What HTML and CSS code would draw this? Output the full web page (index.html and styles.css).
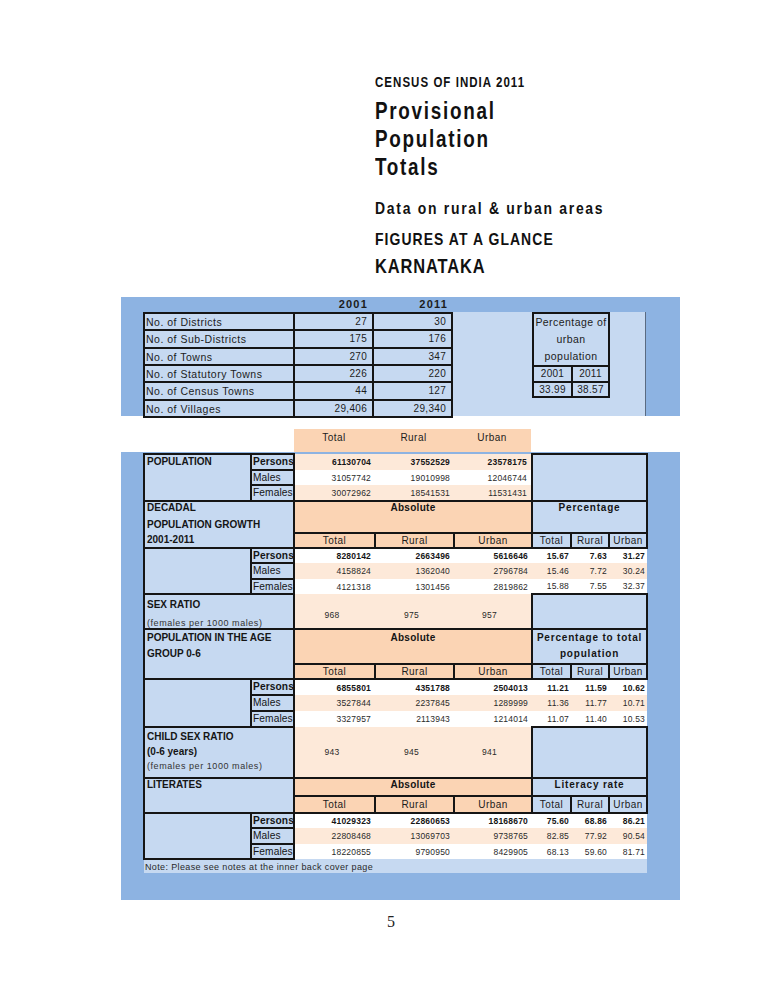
FILE: index.html
```html
<!DOCTYPE html>
<html lang="en">
<head>
<meta charset="utf-8">
<title>Census of India 2011 - Karnataka</title>
<link rel="stylesheet" href="styles.css">
</head>
<body>
<div class="page">
  <header class="title">
    <div class="census">CENSUS OF INDIA 2011</div>
    <h1>Provisional<br>Population<br>Totals</h1>
    <div class="sub1">Data on rural &amp; urban areas</div>
    <div class="sub2">FIGURES AT A GLANCE</div>
    <div class="sub3">KARNATAKA</div>
  </header>

  <section class="panel toppanel">
    <div class="yearhead">
      <span></span><span>2001</span><span>2011</span>
    </div>
    <div class="toparea">
      <table class="facts">
        <tr class="h17"><td class="fl">No. of Districts</td><td class="fv">27</td><td class="fv">30</td></tr>
        <tr class="h18"><td class="fl">No. of Sub-Districts</td><td class="fv">175</td><td class="fv">176</td></tr>
        <tr class="h17"><td class="fl">No. of Towns</td><td class="fv">270</td><td class="fv">347</td></tr>
        <tr class="h17"><td class="fl">No. of Statutory Towns</td><td class="fv">226</td><td class="fv">220</td></tr>
        <tr class="h18"><td class="fl">No. of Census Towns</td><td class="fv">44</td><td class="fv">127</td></tr>
        <tr class="h17"><td class="fl">No. of Villages</td><td class="fv">29,406</td><td class="fv">29,340</td></tr>
      </table>
      <div class="pctbox">
        <div class="pcttitle">Percentage of<br>urban<br>population</div>
        <div class="pctgrid">
          <span>2001</span><span class="pr">2011</span>
          <span>33.99</span><span class="pr">38.57</span>
        </div>
      </div>
    </div>
  </section>

  <div class="colhead"><span>Total</span><span>Rural</span><span>Urban</span></div>

  <section class="panel mainpanel">
    <table class="grid">
      <colgroup>
        <col class="c1"><col class="c2"><col class="c3"><col class="c4"><col class="c5"><col class="c6"><col class="c7"><col class="c8">
      </colgroup>

      <tr class="h16 tint">
        <td class="lbl lpop" rowspan="3">POPULATION</td>
        <td class="sl b">Persons</td>
        <td class="n b">61130704</td><td class="n b">37552529</td><td class="n b">23578175</td>
        <td class="blank" colspan="3" rowspan="3"></td>
      </tr>
      <tr class="h15 plain">
        <td class="sl">Males</td>
        <td class="n">31057742</td><td class="n">19010998</td><td class="n">12046744</td>
      </tr>
      <tr class="h16 tint">
        <td class="sl">Females</td>
        <td class="n">30072962</td><td class="n">18541531</td><td class="n">11531431</td>
      </tr>

      <tr class="h32">
        <td class="lbl ldec" colspan="2" rowspan="2"><span class="d1">DECADAL</span><span class="d2">POPULATION GROWTH</span><span class="d3">2001-2011</span></td>
        <td class="ah ah1" colspan="3">Absolute</td>
        <td class="ph ph1" colspan="3">Percentage</td>
      </tr>
      <tr class="h15">
        <td class="as">Total</td><td class="as">Rural</td><td class="as">Urban</td>
        <td class="ps">Total</td><td class="ps">Rural</td><td class="ps">Urban</td>
      </tr>
      <tr class="h15 plain">
        <td class="lbl" rowspan="3"></td>
        <td class="sl b">Persons</td>
        <td class="n b">8280142</td><td class="n b">2663496</td><td class="n b">5616646</td>
        <td class="n p b">15.67</td><td class="n p b">7.63</td><td class="n p b">31.27</td>
      </tr>
      <tr class="h16 tint">
        <td class="sl">Males</td>
        <td class="n">4158824</td><td class="n">1362040</td><td class="n">2796784</td>
        <td class="n p">15.46</td><td class="n p">7.72</td><td class="n p">30.24</td>
      </tr>
      <tr class="h15 plain">
        <td class="sl">Females</td>
        <td class="n">4121318</td><td class="n">1301456</td><td class="n">2819862</td>
        <td class="n p">15.88</td><td class="n p">7.55</td><td class="n p">32.37</td>
      </tr>

      <tr class="h35">
        <td class="lbl lsex" colspan="2"><span class="ln">SEX RATIO</span><span class="sm">(females per 1000 males)</span></td>
        <td class="rv rsex">968</td><td class="rv rsex">975</td><td class="rv rsex">957</td>
        <td class="blank" colspan="3"></td>
      </tr>

      <tr class="h35">
        <td class="lbl lage" colspan="2" rowspan="2">POPULATION IN THE AGE<br>GROUP 0-6</td>
        <td class="ah ah2" colspan="3">Absolute</td>
        <td class="ph ph2" colspan="3">Percentage to total<br>population</td>
      </tr>
      <tr class="h15">
        <td class="as">Total</td><td class="as">Rural</td><td class="as">Urban</td>
        <td class="ps">Total</td><td class="ps">Rural</td><td class="ps">Urban</td>
      </tr>
      <tr class="h16 plain">
        <td class="lbl" rowspan="3"></td>
        <td class="sl b">Persons</td>
        <td class="n b">6855801</td><td class="n b">4351788</td><td class="n b">2504013</td>
        <td class="n p b">11.21</td><td class="n p b">11.59</td><td class="n p b">10.62</td>
      </tr>
      <tr class="h16 tint">
        <td class="sl">Males</td>
        <td class="n">3527844</td><td class="n">2237845</td><td class="n">1289999</td>
        <td class="n p">11.36</td><td class="n p">11.77</td><td class="n p">10.71</td>
      </tr>
      <tr class="h16 plain">
        <td class="sl">Females</td>
        <td class="n">3327957</td><td class="n">2113943</td><td class="n">1214014</td>
        <td class="n p">11.07</td><td class="n p">11.40</td><td class="n p">10.53</td>
      </tr>

      <tr class="h51">
        <td class="lbl lchild" colspan="2"><span class="ln">CHILD SEX RATIO</span><span class="ln">(0-6 years)</span><span class="sm sm2">(females per 1000 males)</span></td>
        <td class="rv">943</td><td class="rv">945</td><td class="rv">941</td>
        <td class="blank" colspan="3"></td>
      </tr>

      <tr class="h18">
        <td class="lbl llit" colspan="2" rowspan="2">LITERATES</td>
        <td class="ah ah3" colspan="3">Absolute</td>
        <td class="ph ph3" colspan="3">Literacy rate</td>
      </tr>
      <tr class="h17">
        <td class="as">Total</td><td class="as">Rural</td><td class="as">Urban</td>
        <td class="ps">Total</td><td class="ps">Rural</td><td class="ps">Urban</td>
      </tr>
      <tr class="h15 plain">
        <td class="lbl" rowspan="3"></td>
        <td class="sl b">Persons</td>
        <td class="n b">41029323</td><td class="n b">22860653</td><td class="n b">18168670</td>
        <td class="n p b">75.60</td><td class="n p b">68.86</td><td class="n p b">86.21</td>
      </tr>
      <tr class="h16 tint">
        <td class="sl">Males</td>
        <td class="n">22808468</td><td class="n">13069703</td><td class="n">9738765</td>
        <td class="n p">82.85</td><td class="n p">77.92</td><td class="n p">90.54</td>
      </tr>
      <tr class="h15 plain">
        <td class="sl">Females</td>
        <td class="n">18220855</td><td class="n">9790950</td><td class="n">8429905</td>
        <td class="n p">68.13</td><td class="n p">59.60</td><td class="n p">81.71</td>
      </tr>
      <tr class="h14">
        <td class="note" colspan="8">Note: Please see notes at the inner back cover page</td>
      </tr>
    </table>
  </section>

  <div class="pageno">5</div>
</div>
</body>
</html>
```

FILE: styles.css
```css
* { box-sizing: border-box; }

body {
  margin: 0;
  background: #ffffff;
  color: #1c1c1c;
  font-family: "Liberation Sans", Arial, sans-serif;
}

.page {
  width: 768px;
  height: 994px;
  overflow: hidden;
}

/* ---------- title block (narrow, spaced lettering) ---------- */
.title {
  margin-left: 375px;
  padding-top: 74px;
  font-weight: bold;
  color: #111;
  transform: scaleX(0.82);
  transform-origin: left top;
}
.census { font-size: 14px; line-height: 16px; letter-spacing: 1.28px; }
.title h1 {
  margin: 6.5px 0 0;
  font-size: 23px;
  line-height: 28px;
  letter-spacing: 2.1px;
}
.sub1 { margin-top: 17px; font-size: 17px; line-height: 22px; letter-spacing: 2.1px; }
.sub2 { margin-top: 9px; font-size: 17px; line-height: 22px; letter-spacing: 1.3px; }
.sub3 { margin-top: 3px; font-size: 20px; line-height: 24px; letter-spacing: 1.1px; }

/* ---------- panels ---------- */
.panel {
  margin-left: 121px;
  width: 559px;
  background: #8db3e2;
  padding-left: 22px;
}

.toppanel { margin-top: 19.5px; }

.yearhead {
  display: grid;
  grid-template-columns: 150px 79px 80px;
  height: 15px;
  font-size: 11px;
  line-height: 15px;
  font-weight: bold;
  letter-spacing: 1.2px;
  text-align: right;
}
.yearhead span { padding-right: 4px; }

.toparea {
  width: 503px;
  height: 104px;
  background: #c6d9f1;
  display: flex;
  align-items: flex-start;
  border-right: 1px solid #5a6b82;
}

.facts {
  border-collapse: collapse;
  table-layout: fixed;
  width: 309px;
}
.facts td {
  border: 2px solid #151515;
  padding: 0 0 0 1px;
  font-size: 10.5px;
  line-height: 12px;
  letter-spacing: 0.5px;
  white-space: nowrap;
  color: #1c1c1c;
}
.facts .fl { width: 150px; }
.facts .fv { width: 79px; text-align: right; padding-right: 5px; font-size: 10px; letter-spacing: 0.3px; }

.h14 { height: 14px; }
.h15 { height: 15px; }
.h16 { height: 16px; }
.h17 { height: 17px; }
.h18 { height: 18px; }
.h32 { height: 32px; }
.h35 { height: 35px; }
.h51 { height: 51px; }

.pctbox {
  margin-left: 79px;
  width: 78px;
  height: 86px;
  border: 2px solid #151515;
  display: flex;
  flex-direction: column;
  font-size: 10.5px;
  letter-spacing: 0.45px;
  white-space: nowrap;
}
.pcttitle {
  height: 51px;
  line-height: 17px;
  text-align: center;
}
.pctgrid {
  flex: 1;
  display: grid;
  grid-template-columns: 1fr 1fr;
  grid-template-rows: 1fr 1fr;
  text-align: center;
  font-size: 10px;
  letter-spacing: 0.3px;
}
.pctgrid span {
  border-top: 2px solid #151515;
  display: flex;
  align-items: center;
  justify-content: center;
}
.pctgrid .pr { border-left: 2px solid #151515; }

/* ---------- column heading above main panel ---------- */
.colhead {
  margin: 13px 0 0 294px;
  width: 237px;
  height: 23px;
  background: #fbd4b4;
  display: grid;
  grid-template-columns: 80px 79px 78px;
  text-align: center;
  font-size: 10px;
  letter-spacing: 0.45px;
  line-height: 12px;
  padding-top: 3px;
}

/* ---------- main table ---------- */
.mainpanel {
  padding-top: 1px;
  height: 448px;
}

.grid {
  border-collapse: collapse;
  table-layout: fixed;
  width: 503px;
}
.c1 { width: 107px; }
.c2 { width: 43px; }
.c3 { width: 81px; }
.c4 { width: 79px; }
.c5 { width: 78px; }
.c6 { width: 39px; }
.c7 { width: 38px; }
.c8 { width: 38px; }

.grid td {
  padding: 0;
  font-size: 8.5px;
  line-height: 10px;
  letter-spacing: 0.2px;
  white-space: nowrap;
  overflow: visible;
  color: #2a2a2a;
}

.grid .lbl {
  background: #c6d9f1;
  border: 2px solid #151515;
  vertical-align: top;
  font-size: 10px;
  line-height: 12px;
  font-weight: bold;
  letter-spacing: 0;
  padding: 0 0 0 2px;
  color: #151515;
}
.grid .lpop { padding-top: 1px; }
.grid .ldec { padding-top: 1px; }
.d1, .d2, .d3 { display: block; }
.d1 { line-height: 10px; }
.d2 { margin-top: 5.5px; line-height: 11px; }
.d3 { margin-top: 6.5px; line-height: 8px; }
.grid .lage { line-height: 16px; }
.grid .lsex { padding-top: 2.5px; }
.grid .lsex .ln { line-height: 13px; }
.grid .lchild { padding-top: 0.5px; }
.grid .lchild .ln { line-height: 15px; }
.ln { display: block; }
.sm {
  display: block;
  margin-top: 8.5px;
  font-size: 9px;
  line-height: 9px;
  font-weight: normal;
  letter-spacing: 0.56px;
  color: #333;
}
.sm2 { margin-top: 0; line-height: 15px; }

.grid .sl {
  background: #c6d9f1;
  border: 2px solid #151515;
  font-size: 10.2px;
  line-height: 10px;
  letter-spacing: 0.1px;
  padding-left: 1px;
  color: #151515;
}

.grid .n {
  text-align: right;
  padding-right: 4px;
  vertical-align: middle;
}
.grid .p { padding-right: 2px; }
.grid .b { font-weight: bold; color: #151515; }

.tint .n { background: #fde9d9; }
.plain .n { background: #ffffff; }

.grid .blank {
  background: #c6d9f1;
  border: 2px solid #151515;
}

.grid .ah,
.grid .ph {
  border: 2px solid #151515;
  text-align: center;
  vertical-align: top;
  font-size: 10px;
  line-height: 12px;
  font-weight: bold;
  padding-top: 0;
  color: #151515;
}
.grid .ah { background: #fbd4b4; letter-spacing: 0.3px; }
.grid .ph { background: #c6d9f1; letter-spacing: 0.8px; }
.grid .ah1, .grid .ph1 { line-height: 10px; padding-top: 1px; }
.grid .ah2 { padding-top: 2px; }
.grid .ph2 { line-height: 15.5px; }

.grid .as,
.grid .ps {
  border: 2px solid #151515;
  text-align: center;
  font-size: 10px;
  line-height: 10px;
  letter-spacing: 0.45px;
  color: #1c1c1c;
}
.grid .as { background: #fbd4b4; }
.grid .ps { background: #c6d9f1; }

.grid .rv {
  background: #fde9d9;
  text-align: center;
  padding-right: 6px;
  vertical-align: middle;
}
.grid .rsex { padding-top: 8px; }

.grid .note {
  background: #c6d9f1;
  font-size: 9px;
  line-height: 10px;
  letter-spacing: 0.37px;
  padding-left: 1px;
  color: #2a2a2a;
}

/* ---------- page number ---------- */
.pageno {
  margin-top: 12px;
  padding-left: 14px;
  text-align: center;
  font-family: "Liberation Serif", "Times New Roman", serif;
  font-size: 16px;
  line-height: 20px;
  color: #222;
}
```
